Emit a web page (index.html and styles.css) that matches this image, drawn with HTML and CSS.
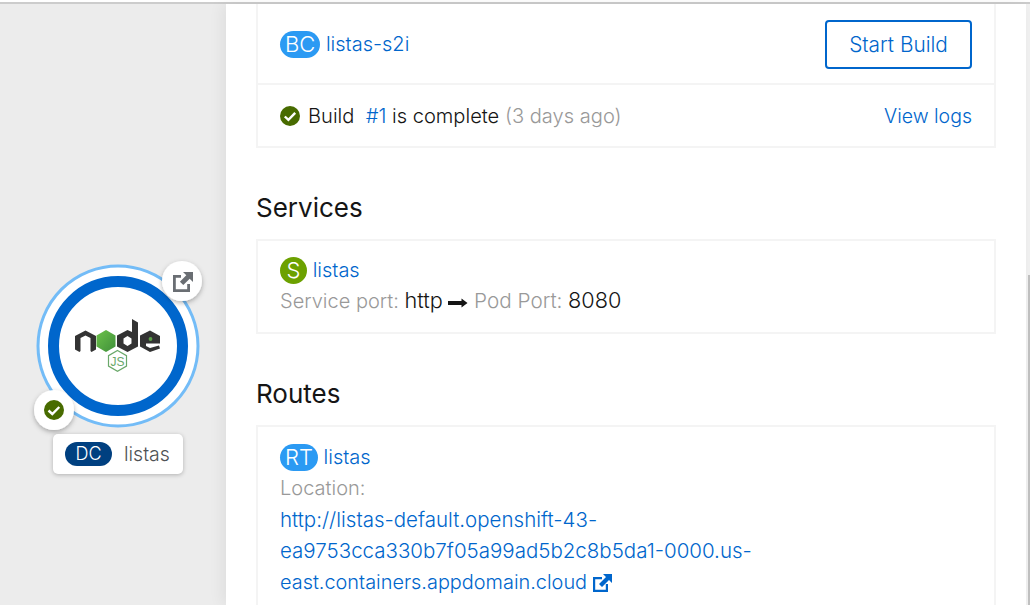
FILE: index.html
```html
<!DOCTYPE html>
<html lang="en">
<head>
<meta charset="utf-8">
<title>Topology</title>
<link rel="stylesheet" href="styles.css">
</head>
<body>
<div class="topline"></div>
<div class="main">
  <div class="canvas">
    <svg class="node" width="226" height="240" viewBox="0 0 226 240">
      <defs>
        <filter id="sh" x="-40%" y="-40%" width="180%" height="180%"><feDropShadow dx="0" dy="2" stdDeviation="2.5" flood-color="#000" flood-opacity=".3"/></filter>
        <linearGradient id="gr" x1="0" y1="0" x2="1" y2="1"><stop offset="0" stop-color="#6cc24a"/><stop offset="1" stop-color="#3f8f3a"/></linearGradient>
      </defs>
      <circle cx="118" cy="126" r="80" fill="#fff" stroke="#73bcf7" stroke-width="3"/>
      <circle cx="118" cy="126" r="64.5" fill="#fff" stroke="#06c" stroke-width="11"/>
      <path d="M75 116l10.500-5.500 10.500 5.500v13.500l-4.500 2.500-1-1v-13l-5-2.500-5 2.500v13l-1 1-4.500-2.500z" fill="#333"/>
      <path d="M106 110l9.500 5.500v11l-9.500 5.500-9.500-5.500v-11z" fill="url(#gr)"/>
      <path d="M132 99l6 3.500v24l-10.500 5.500-10.500-5.500v-11l10.500-5.500 4.500 2zM127.500 116l-4 2.500v5l4 2.500 4-2.500v-5z" fill="#333" fill-rule="evenodd"/>
      <path d="M150 110.500l10 5.500v7.500h-14v2.500l4 2 9-2.500 1 3-10 3.500-10-5.500v-11z" fill="#333"/>
      <circle cx="150.500" cy="119" r="1.900" fill="#5a9e46"/>
      <path d="M117.500 130.500l9 5.200v10.400l-9 5.200-9-5.200v-10.400z" fill="#fff" stroke="#6aa86a" stroke-width="1.200"/>
      <text class="jsmark" x="117.500" y="145.500">JS</text>
      <circle cx="182" cy="61" r="20" fill="#fff" filter="url(#sh)"/>
      <path d="M173 55h8v2.800h-5.200v11.400h11.400V64h2.800v8H173z" fill="#6a6e73"/>
      <path d="M183 52h10v10l-3.300-3.300-6.400 6.400-3.400-3.400 6.400-6.400z" fill="#6a6e73"/>
      <circle cx="54" cy="190" r="20" fill="#fff" filter="url(#sh)"/>
      <circle cx="54" cy="190" r="10" fill="#486b00"/>
      <path d="M48.500 190.500l3.800 3.500 7-7" fill="none" stroke="#fff" stroke-width="2.400"/>
    </svg>
    <div class="label">
      <span class="pill pill-dc">DC</span>
      <span class="label-name">listas</span>
    </div>
  </div>
  <main class="panel">
    <section class="card card-top">
      <div class="row row-bc">
        <div><span class="pill pill-blue">BC</span> <a class="link">listas-s2i</a></div>
        <button class="btn">Start Build</button>
      </div>
      <div class="row row-build">
        <div class="status">
          <svg class="check" width="20" height="20" viewBox="0 0 20 20"><circle cx="10" cy="10" r="10" fill="#486b00"/><path d="M4.800 10.500l3.600 3.400 6.800-7" fill="none" stroke="#fff" stroke-width="2.400"/></svg>
          <span class="status-text">Build&nbsp; <a class="link">#1</a> is complete <span class="muted">(3 days ago)</span></span>
        </div>
        <a class="link logs">View logs</a>
      </div>
    </section>
    <h2 class="heading">Services</h2>
    <section class="card card-body">
      <div><span class="pill pill-green">S</span> <a class="link">listas</a></div>
      <div class="port"><span class="muted">Service port:</span> <span class="value">http</span> <svg class="arrow" width="20" height="12" viewBox="0 0 20 12"><path d="M0 4h13.500V1.500L19.500 6l-6 4.500V8H0z" fill="#151515"/></svg> <span class="muted pod">Pod Port:</span> <span class="value">8080</span></div>
    </section>
    <h2 class="heading">Routes</h2>
    <section class="card card-body card-routes">
      <div><span class="pill pill-blue">RT</span> <a class="link">listas</a></div>
      <div class="muted">Location:</div>
      <a class="link url">http://listas-default.openshift-43-ea9753cca330b7f05a99ad5b2c8b5da1-0000.us-<span class="url-host">east.containers.appdomain.cloud</span> <svg class="ext" width="19" height="18" viewBox="0 0 19 18"><path d="M0 3h9v2.200H2.200v10.600h10.600V10H15v8H0z" fill="#06c"/><path d="M10 0h9v9l-3-3-7 7-3-3 7-7z" fill="#06c"/></svg></a>
    </section>
  </main>
  <div class="scrollbar"><div class="thumb"></div></div>
</div>
</body>
</html>
```
FILE: styles.css
```css
* { box-sizing: border-box; }
html, body { margin: 0; height: 100%; overflow: hidden; }
body {
  background: #fff;
  font-family: "Inter", "Liberation Sans", sans-serif;
  font-size: 20px;
  font-weight: 300;
  line-height: 31px;
  color: #151515;
}
.topline { height: 4px; border-top: 2px solid #fff; background: #ccc; }
.main { display: flex; height: 601px; }
.canvas { position: relative; width: 226px; flex: none; background: #ececec; }
.node { position: absolute; left: 0; top: 216px; }
.jsmark { font: 400 12px "Liberation Sans", sans-serif; fill: #6aa86a; text-anchor: middle; }
.label {
  position: absolute; left: 53px; top: 430px; width: 130px; height: 40px;
  background: #fff; border-radius: 5px; box-shadow: 0 1px 4px rgba(0,0,0,.25);
  display: flex; align-items: center; padding-left: 12px; gap: 12px; font-size: 19.5px;
}
.label-name { color: #4f5255; }
.panel { flex: 1; padding: 0 30px; min-width: 0; box-shadow: -4px 0 14px rgba(0,0,0,.06); position: relative; background: #fff; }
.card { border: 2px solid #f4f4f4; }
.card-top { border-top: 0; }
.row { display: flex; justify-content: space-between; align-items: center; padding: 0 22px; }
.row-bc { height: 81px; border-bottom: 2px solid #f4f4f4; padding-top: 2px; }
.row-build { height: 61px; padding-top: 2px; }
.status { display: flex; align-items: center; gap: 8px; }
.check { margin-top: -2px; }
.status-text { font-size: 20.1px; }
.logs { font-size: 19.5px; }
.link { color: #06c; text-decoration: none; }
.muted { color: #999; }
.pill {
  display: inline-block; min-width: 27px; height: 27px; line-height: 27px;
  border-radius: 14px; text-align: center; color: #fff; padding: 0 5px; font-size: 22px;
  vertical-align: -1px;
}
.pill-blue { background: #2b9af3; }
.pill-green { background: #6ca100; padding: 0; }
.pill-dc { background: #004080; width: 47px; height: 24px; line-height: 24px; font-size: 18px; padding: 0; }
.btn {
  width: 147px; height: 49px; border: 2px solid #06c; border-radius: 4px; background: #fff;
  color: #06c; font: inherit; font-size: 20.8px; padding: 0;
}
.heading { font-size: 26px; font-weight: 400; line-height: 40px; margin: 40px 0 11px; color: #151515; }
.card-body { padding: 14px 22px 15px; }
.card-routes { padding-top: 15px; }
.value { font-size: 21.7px; line-height: 1; }
.pod { font-size: 20.7px; line-height: 1; }
.url { display: block; font-size: 20.5px; }
.url-host { font-size: 19.9px; }
.arrow { vertical-align: -1px; }
.ext { vertical-align: -3px; }
.scrollbar { width: 4px; flex: none; background: #f1f1f1; padding-top: 271px; padding-left: 2px; }
.thumb { height: 330px; background: #c1c1c1; }
```
